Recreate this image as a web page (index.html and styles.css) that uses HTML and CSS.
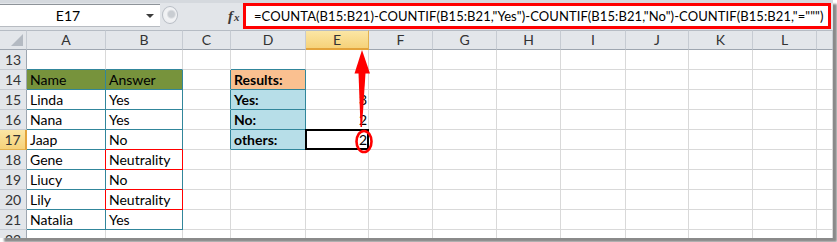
FILE: index.html
```html
<!DOCTYPE html>
<html>
<head>
<meta charset="utf-8">
<link rel="stylesheet" href="styles.css">
</head>
<body>
<div class="wrap">
  <div class="fbar">
    <div class="namebox"><span class="nb-text">E17</span><span class="nb-drop"></span></div>
    <div class="grip"></div>
    <div class="fx"><i>f</i><i class="x">x</i></div>
    <div class="formula">=COUNTA(B15:B21)-COUNTIF(B15:B21,"Yes")-COUNTIF(B15:B21,"No")-COUNTIF(B15:B21,"=""")</div>
  </div>
  <div class="grid">
    <div class="h corner"><span class="tri"></span></div><div class="h">A</div><div class="h">B</div><div class="h">C</div><div class="h">D</div><div class="h hsel">E</div><div class="h">F</div><div class="h">G</div><div class="h">H</div><div class="h">I</div><div class="h">J</div><div class="h">K</div><div class="h">L</div><div class="h"></div>

    <div class="r">13</div><div class="c tb"></div><div class="c tb"></div><div class="c"></div><div class="c tb"></div><div class="c"></div><div class="c"></div><div class="c"></div><div class="c"></div><div class="c"></div><div class="c"></div><div class="c"></div><div class="c"></div><div class="c"></div>

    <div class="r">14</div><div class="c t g">Name</div><div class="c t g">Answer</div><div class="c tr"></div><div class="c t o bold">Results:</div><div class="c"></div><div class="c"></div><div class="c"></div><div class="c"></div><div class="c"></div><div class="c"></div><div class="c"></div><div class="c"></div><div class="c"></div>

    <div class="r">15</div><div class="c t">Linda</div><div class="c t">Yes</div><div class="c tr"></div><div class="c t bl bold">Yes:</div><div class="c num">3</div><div class="c"></div><div class="c"></div><div class="c"></div><div class="c"></div><div class="c"></div><div class="c"></div><div class="c"></div><div class="c"></div>

    <div class="r">16</div><div class="c t">Nana</div><div class="c t">Yes</div><div class="c tr"></div><div class="c t bl bold">No:</div><div class="c num">2</div><div class="c"></div><div class="c"></div><div class="c"></div><div class="c"></div><div class="c"></div><div class="c"></div><div class="c"></div><div class="c"></div>

    <div class="r rsel">17</div><div class="c t">Jaap</div><div class="c t rdb">No</div><div class="c tr"></div><div class="c t bl bold brown">others:</div><div class="c num active">2</div><div class="c"></div><div class="c"></div><div class="c"></div><div class="c"></div><div class="c"></div><div class="c"></div><div class="c"></div><div class="c"></div>

    <div class="r">18</div><div class="c t rdr">Gene</div><div class="c t rd">Neutrality</div><div class="c"></div><div class="c"></div><div class="c"></div><div class="c"></div><div class="c"></div><div class="c"></div><div class="c"></div><div class="c"></div><div class="c"></div><div class="c"></div><div class="c"></div>

    <div class="r">19</div><div class="c t">Liucy</div><div class="c t rdb">No</div><div class="c"></div><div class="c"></div><div class="c"></div><div class="c"></div><div class="c"></div><div class="c"></div><div class="c"></div><div class="c"></div><div class="c"></div><div class="c"></div><div class="c"></div>

    <div class="r">20</div><div class="c t rdr">Lily</div><div class="c t rd">Neutrality</div><div class="c"></div><div class="c"></div><div class="c"></div><div class="c"></div><div class="c"></div><div class="c"></div><div class="c"></div><div class="c"></div><div class="c"></div><div class="c"></div><div class="c"></div>

    <div class="r">21</div><div class="c t">Natalia</div><div class="c t">Yes</div><div class="c"></div><div class="c"></div><div class="c"></div><div class="c"></div><div class="c"></div><div class="c"></div><div class="c"></div><div class="c"></div><div class="c"></div><div class="c"></div><div class="c"></div>

    <div class="r">22</div><div class="c"></div><div class="c"></div><div class="c"></div><div class="c"></div><div class="c"></div><div class="c"></div><div class="c"></div><div class="c"></div><div class="c"></div><div class="c"></div><div class="c"></div><div class="c"></div><div class="c"></div>
  </div>
  <svg class="annot" width="837" height="242" viewBox="0 0 837 242">
    <polygon points="362,50 354.5,73.5 370,73.5" fill="#ff0000"/>
    <polygon points="358.5,73 365.5,73 362,127 360.5,127" fill="#ff0000"/>
    <ellipse cx="364" cy="141.5" rx="7.5" ry="10.5" fill="none" stroke="#ff0000" stroke-width="2.6"/>
  </svg>
</div>
</body>
</html>
```

FILE: styles.css
```css
html, body {
  margin: 0;
  padding: 0;
  background: #ffffff;
}
body {
  width: 837px;
  height: 242px;
  overflow: hidden;
  font-family: Lato, "Liberation Sans", sans-serif;
}
.wrap {
  position: relative;
  width: 833px;
  height: 238px;
  background: #ffffff;
  box-shadow: 4px 4px 2px #8a8a8a;
}
.fbar {
  display: flex;
  align-items: flex-start;
  height: 30px;
  box-sizing: border-box;
  background: #e2e5e9;
  border-top: 3px solid #d5d9de;
}
.namebox {
  display: flex;
  align-items: center;
  width: 160px;
  height: 23px;
  margin-top: 1px;
  box-sizing: border-box;
  background: #ffffff;
  border-top: 1px solid #8e9399;
  border-bottom: 1px solid #b8bcc2;
}
.nb-text {
  width: 136px;
  text-align: center;
  font-size: 14px;
  color: #000;
}
.nb-drop {
  width: 0;
  height: 0;
  margin-left: 10px;
  border-left: 4px solid transparent;
  border-right: 4px solid transparent;
  border-top: 4px solid #3c3c3c;
}
.grip {
  width: 16px;
  height: 18px;
  margin: 3px 0 0 2px;
  border-radius: 50%;
  box-sizing: border-box;
  border: 1px solid #b9bec5;
  background: radial-gradient(circle at 60% 45%, #c9cdd2 0, #c9cdd2 3px, #f2f3f5 5px, #e8eaed 100%);
}
.fx {
  width: 14px;
  margin: 6px 0 0 50px;
  font-family: "Liberation Serif", serif;
  font-size: 15px;
  line-height: 15px;
  color: #3a3a3a;
  font-weight: bold;
}
.fx .x {
  font-size: 11px;
  margin-left: 1px;
}
.formula {
  flex: 1;
  height: 26px;
  margin: 0 2px 0 1px;
  box-sizing: border-box;
  border: 3px solid #ff0000;
  background: #ffffff;
  padding-left: 8px;
  font-size: 13px;
  letter-spacing: 0.08px;
  line-height: 20px;
  color: #000;
  white-space: nowrap;
  overflow: hidden;
}
.grid {
  display: grid;
  grid-template-columns: 27px 79px 77px 48px 75px 63px 64px 64px 64px 65px 63px 64px 64px 16px;
  grid-auto-rows: 20px;
  height: 208px;
  overflow: hidden;
}
.grid > div {
  box-sizing: border-box;
  border-right: 1px solid #d9d9d9;
  border-bottom: 1px solid #d9d9d9;
  font-size: 14px;
  line-height: 19px;
  white-space: nowrap;
  overflow: visible;
}
.grid > .h {
  background: #e3e6ea;
  border-top: 1px solid #b6bcc4;
  border-right: 1px solid #c6cbd2;
  border-bottom: 1px solid #9ea6b0;
  text-align: center;
  color: #333;
  line-height: 18px;
}
.grid > .hsel {
  background: linear-gradient(#fbe6a4, #f6d27a);
  border-right: 1px solid #e2b14f;
  border-bottom: 2px solid #e3a33b;
}
.grid > .corner {
  position: relative;
}
.tri {
  position: absolute;
  right: 3px;
  bottom: 3px;
  width: 0;
  height: 0;
  border-left: 12px solid transparent;
  border-bottom: 12px solid #b4bac2;
}
.grid > .r {
  background: #e3e6ea;
  border-right: 1px solid #9ea6b0;
  border-bottom: 1px solid #c6cbd2;
  text-align: center;
  color: #333;
}
.grid > .rsel {
  background: linear-gradient(#fbe6a4, #f6d27a);
  border-bottom: 1px solid #e2b14f;
  border-right: 2px solid #e3a33b;
}
.grid > .c {
  padding: 0 3px;
  color: #000;
}
.grid > .t {
  border-right: 1px solid #31869b;
  border-bottom: 1px solid #31869b;
}
.grid > .tb {
  border-bottom: 1px solid #31869b;
}
.grid > .tr {
  border-right: 1px solid #31869b;
}
.grid > .brown {
  border-right: 1px solid #b2745c;
}
.grid > .rd {
  border-right: 1px solid #ff0000;
  border-bottom: 1px solid #ff0000;
}
.grid > .rdb {
  border-bottom: 1px solid #ff0000;
}
.grid > .rdr {
  border-right: 1px solid #ff0000;
}
.g {
  background: #77933c;
}
.o {
  background: #fac090;
}
.bl {
  background: #b7dee8;
}
.bold {
  font-weight: bold;
}
.grid > .num {
  text-align: right;
  padding-right: 1px;
}
.active {
  position: relative;
  z-index: 1;
}
.active::after {
  content: "";
  position: absolute;
  left: -1px;
  top: -1px;
  right: -1px;
  bottom: -1px;
  border: 2px solid #000000;
}
.annot {
  position: absolute;
  left: 0;
  top: 0;
  z-index: 2;
  pointer-events: none;
}
```
